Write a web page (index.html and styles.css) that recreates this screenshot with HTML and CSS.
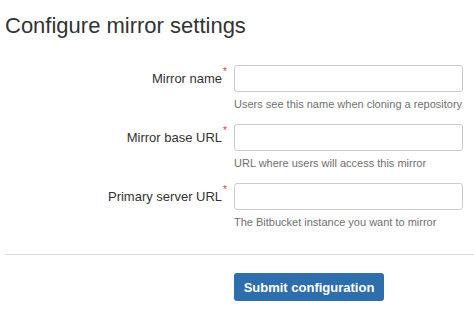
FILE: index.html
```html
<!DOCTYPE html>
<html>
	<head>
		<meta charset="UTF-8">
		<title>Configure mirror settings</title>
		<link rel="stylesheet" href="styles.css">
	</head>
	<body>
		<h1 class="title">Configure mirror settings</h1>
		<form class="mirror-form">
			<div class="field">
				<label for="mirror-name">Mirror name<span class="req">*</span></label>
				<div class="control">
					<input type="text" id="mirror-name">
					<div class="help">Users see this name when cloning a repository</div>
				</div>
			</div>
			<div class="field">
				<label for="mirror-url">Mirror base URL<span class="req">*</span></label>
				<div class="control">
					<input type="text" id="mirror-url">
					<div class="help">URL where users will access this mirror</div>
				</div>
			</div>
			<div class="field">
				<label for="primary-url">Primary server URL<span class="req">*</span></label>
				<div class="control">
					<input type="text" id="primary-url">
					<div class="help">The Bitbucket instance you want to mirror</div>
				</div>
			</div>
			<hr class="divider">
			<div class="buttons">
				<button type="button" class="submit">Submit configuration</button>
			</div>
		</form>
	</body>
</html>
```

FILE: styles.css
```css
body{
	margin: 0;
	padding: 0 0 0 5px;
	font-family: "Liberation Sans", Arial, sans-serif;
	color: #333;
	background: #fff;
}
.title{
	font-size: 22px;
	font-weight: normal;
	line-height: 26px;
	margin: 13px 0 26px 0;
}
.field{
	display: flex;
	margin-bottom: 13px;
}
.field label{
	width: 229px;
	flex: none;
	text-align: right;
	font-size: 13px;
	line-height: 27px;
	padding-right: 7px;
	box-sizing: border-box;
}
.req{
	color: #d04437;
	font-size: 10px;
	vertical-align: top;
	position: relative;
	top: -7px;
	margin-left: 1px;
}
.control{
	width: 229px;
}
.control input{
	display: block;
	width: 229px;
	height: 27px;
	box-sizing: border-box;
	border: 1px solid #ccc;
	border-radius: 3px;
	margin: 0;
	padding: 3px 5px;
	font-size: 13px;
}
.help{
	margin-top: 5px;
	font-size: 11px;
	line-height: 14px;
	color: #707070;
	white-space: nowrap;
}
.divider{
	border: 0;
	border-top: 1px solid #ddd;
	margin: 25px 0 18px 0;
}
.buttons{
	padding-left: 229px;
}
.submit{
	width: 150px;
	height: 28px;
	background: #2f6ead;
	color: #fff;
	border: 0;
	border-radius: 3px;
	font-family: "Liberation Sans", Arial, sans-serif;
	font-size: 13px;
	font-weight: bold;
	padding: 0;
}
```
